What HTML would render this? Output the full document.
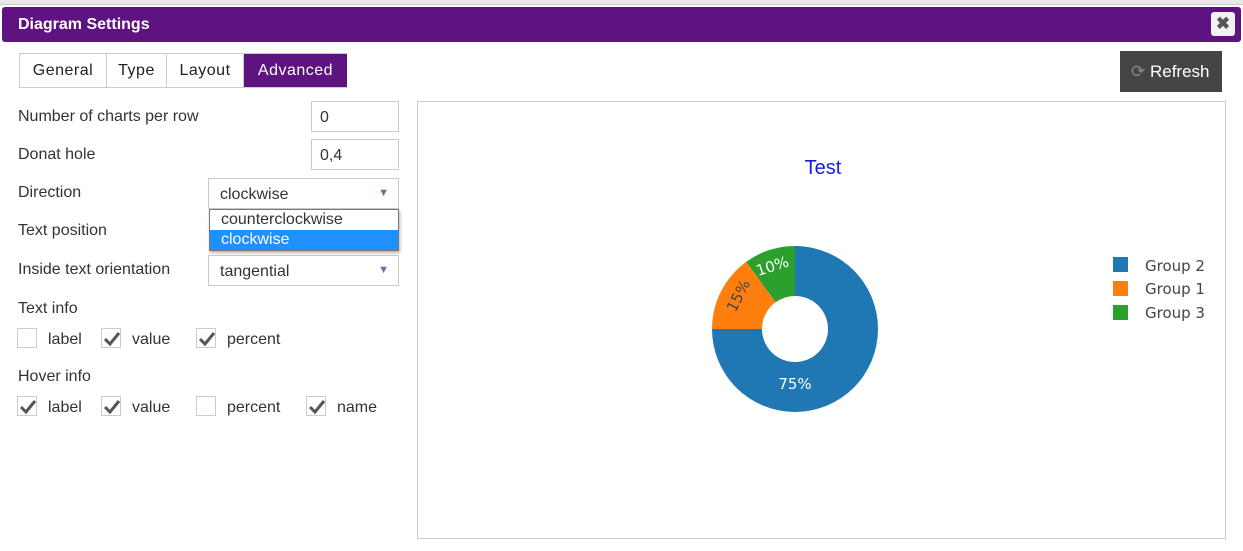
<!DOCTYPE html>
<html><head><meta charset="utf-8"><style>
*{box-sizing:border-box}
body{margin:0;width:1243px;height:551px;background:#fff;font-family:"Liberation Sans",Arial,sans-serif;color:#333;position:relative;overflow:hidden}
.top{position:absolute;left:0;top:0;width:1243px;height:5px;background:#e8e8e8;border-bottom:1px solid #ccc}
.hdr{position:absolute;left:2px;top:7px;width:1239px;height:35px;background:#5e1380;border-radius:3px}
.hdr span{position:absolute;left:16px;top:9px;color:#fff;font-weight:bold;font-size:16px}
.close{position:absolute;right:6px;top:5px;width:24px;height:24px;background:#f2f2f2;border-radius:3px;text-align:center;font-size:17px;line-height:24px;color:#555;font-weight:bold}
.tabs{position:absolute;left:19px;top:53px;height:35px;display:flex;border:1px solid #ccc;border-right:none}
.tabs div{font-size:16px;line-height:34px;border-right:1px solid #ccc;color:#222;letter-spacing:.5px;text-align:center}
.tabs div.a{background:#5e1380;color:#fff;border-right:none}
.refresh{position:absolute;left:1120px;top:51px;width:102px;height:41px;background:#444;color:#fff;font-size:17px;line-height:41px;padding-left:11px}
.refresh b{color:#888;font-weight:normal}
.lbl{position:absolute;left:18px;font-size:16px;color:#333}
.inp{position:absolute;border:1px solid #ccc;height:31px;font-size:16px;line-height:31px;padding-left:8px;background:#fff}
.sel{position:absolute;left:208px;width:191px;border:1px solid #ccc;height:31px;font-size:16px;line-height:31px;padding-left:11px}
.sel i{position:absolute;right:9px;top:0;font-style:normal;color:#8a5fa8;font-size:11px}
.dd{position:absolute;left:209px;top:209px;width:190px;height:42px;border:1px solid #777;background:#fff;box-shadow:1px 2px 3px rgba(0,0,0,.3);font-size:16px}
.dd div{height:20px;line-height:19px;padding-left:11px;color:#333}
.dd div.h{background:#1e90ff;color:#fff}
.cb{position:absolute;width:20px;height:20px;border:1px solid #ccc;background:#fff}
.cb svg{position:absolute;left:1px;top:1px}
.cl{position:absolute;font-size:16px;color:#333}
.chart{position:absolute;left:417px;top:101px;width:809px;height:438px;border:1px solid #ccc}
</style></head><body>
<div class="top"></div>
<div class="hdr"><span>Diagram Settings</span><div class="close">✖</div></div>
<div class="tabs"><div style="width:87px">General</div><div style="width:60px">Type</div><div style="width:77px">Layout</div><div class="a" style="width:103px">Advanced</div></div>
<div class="refresh"><b>⟳</b> Refresh</div>

<div class="lbl" style="top:108px">Number of charts per row</div>
<div class="inp" style="left:311px;top:101px;width:88px">0</div>
<div class="lbl" style="top:146px">Donat hole</div>
<div class="inp" style="left:311px;top:139px;width:88px">0,4</div>
<div class="lbl" style="top:184px">Direction</div>
<div class="sel" style="top:178px">clockwise<i style="line-height:29px">▼</i></div>
<div class="lbl" style="top:222px">Text position</div>
<div class="lbl" style="top:261px">Inside text orientation</div>
<div class="sel" style="top:255px">tangential<i style="line-height:29px">▼</i></div>
<div class="dd"><div>counterclockwise</div><div class="h">clockwise</div></div>
<div class="lbl" style="top:300px">Text info</div>
<div class="lbl" style="top:368px">Hover info</div>

<div class="cb" style="left:17px;top:328px"></div><div class="cl" style="left:48px;top:331px">label</div>
<div class="cb" style="left:101px;top:328px"><svg width="18" height="18"><path d="M2 9 L7 14 L16 3" stroke="#555" stroke-width="3" fill="none"/></svg></div><div class="cl" style="left:132px;top:331px">value</div>
<div class="cb" style="left:196px;top:328px"><svg width="18" height="18"><path d="M2 9 L7 14 L16 3" stroke="#555" stroke-width="3" fill="none"/></svg></div><div class="cl" style="left:227px;top:331px">percent</div>

<div class="cb" style="left:17px;top:396px"><svg width="18" height="18"><path d="M2 9 L7 14 L16 3" stroke="#555" stroke-width="3" fill="none"/></svg></div><div class="cl" style="left:48px;top:399px">label</div>
<div class="cb" style="left:101px;top:396px"><svg width="18" height="18"><path d="M2 9 L7 14 L16 3" stroke="#555" stroke-width="3" fill="none"/></svg></div><div class="cl" style="left:132px;top:399px">value</div>
<div class="cb" style="left:196px;top:396px"></div><div class="cl" style="left:227px;top:399px">percent</div>
<div class="cb" style="left:306px;top:396px"><svg width="18" height="18"><path d="M2 9 L7 14 L16 3" stroke="#555" stroke-width="3" fill="none"/></svg></div><div class="cl" style="left:337px;top:399px">name</div>

<div class="chart"></div>
<svg style="position:absolute;left:0;top:0" width="1243" height="551">
<text x="823" y="174" text-anchor="middle" font-family="Liberation Sans, sans-serif" font-size="20" fill="#1a1ae6">Test</text>
<path d="M795 246 A83 83 0 1 1 712 329 L762 329 A33 33 0 1 0 795 296 Z" fill="#1f77b4"/>
<path d="M712 329 A83 83 0 0 1 746.2 261.9 L775.6 302.3 A33 33 0 0 0 762 329 Z" fill="#ff7f0e"/>
<path d="M746.2 261.9 A83 83 0 0 1 795 246 L795 296 A33 33 0 0 0 775.6 302.3 Z" fill="#2ca02c"/>
<text x="795" y="389" text-anchor="middle" font-family="DejaVu Sans, sans-serif" font-size="15" fill="#fff">75%</text>
<text x="0" y="0" transform="translate(743,298) rotate(-63)" text-anchor="middle" font-family="DejaVu Sans, sans-serif" font-size="15" fill="#444">15%</text>
<text x="0" y="0" transform="translate(774,271) rotate(-18)" text-anchor="middle" font-family="DejaVu Sans, sans-serif" font-size="15" fill="#fff">10%</text>
<rect x="1113" y="257" width="15" height="15" fill="#1f77b4"/>
<rect x="1113" y="281" width="15" height="15" fill="#ff7f0e"/>
<rect x="1113" y="305" width="15" height="15" fill="#2ca02c"/>
<g font-family="DejaVu Sans, sans-serif" font-size="15" fill="#444">
<text x="1145" y="271">Group 2</text><text x="1145" y="294">Group 1</text><text x="1145" y="318">Group 3</text>
</g>
</svg>
</body></html>
